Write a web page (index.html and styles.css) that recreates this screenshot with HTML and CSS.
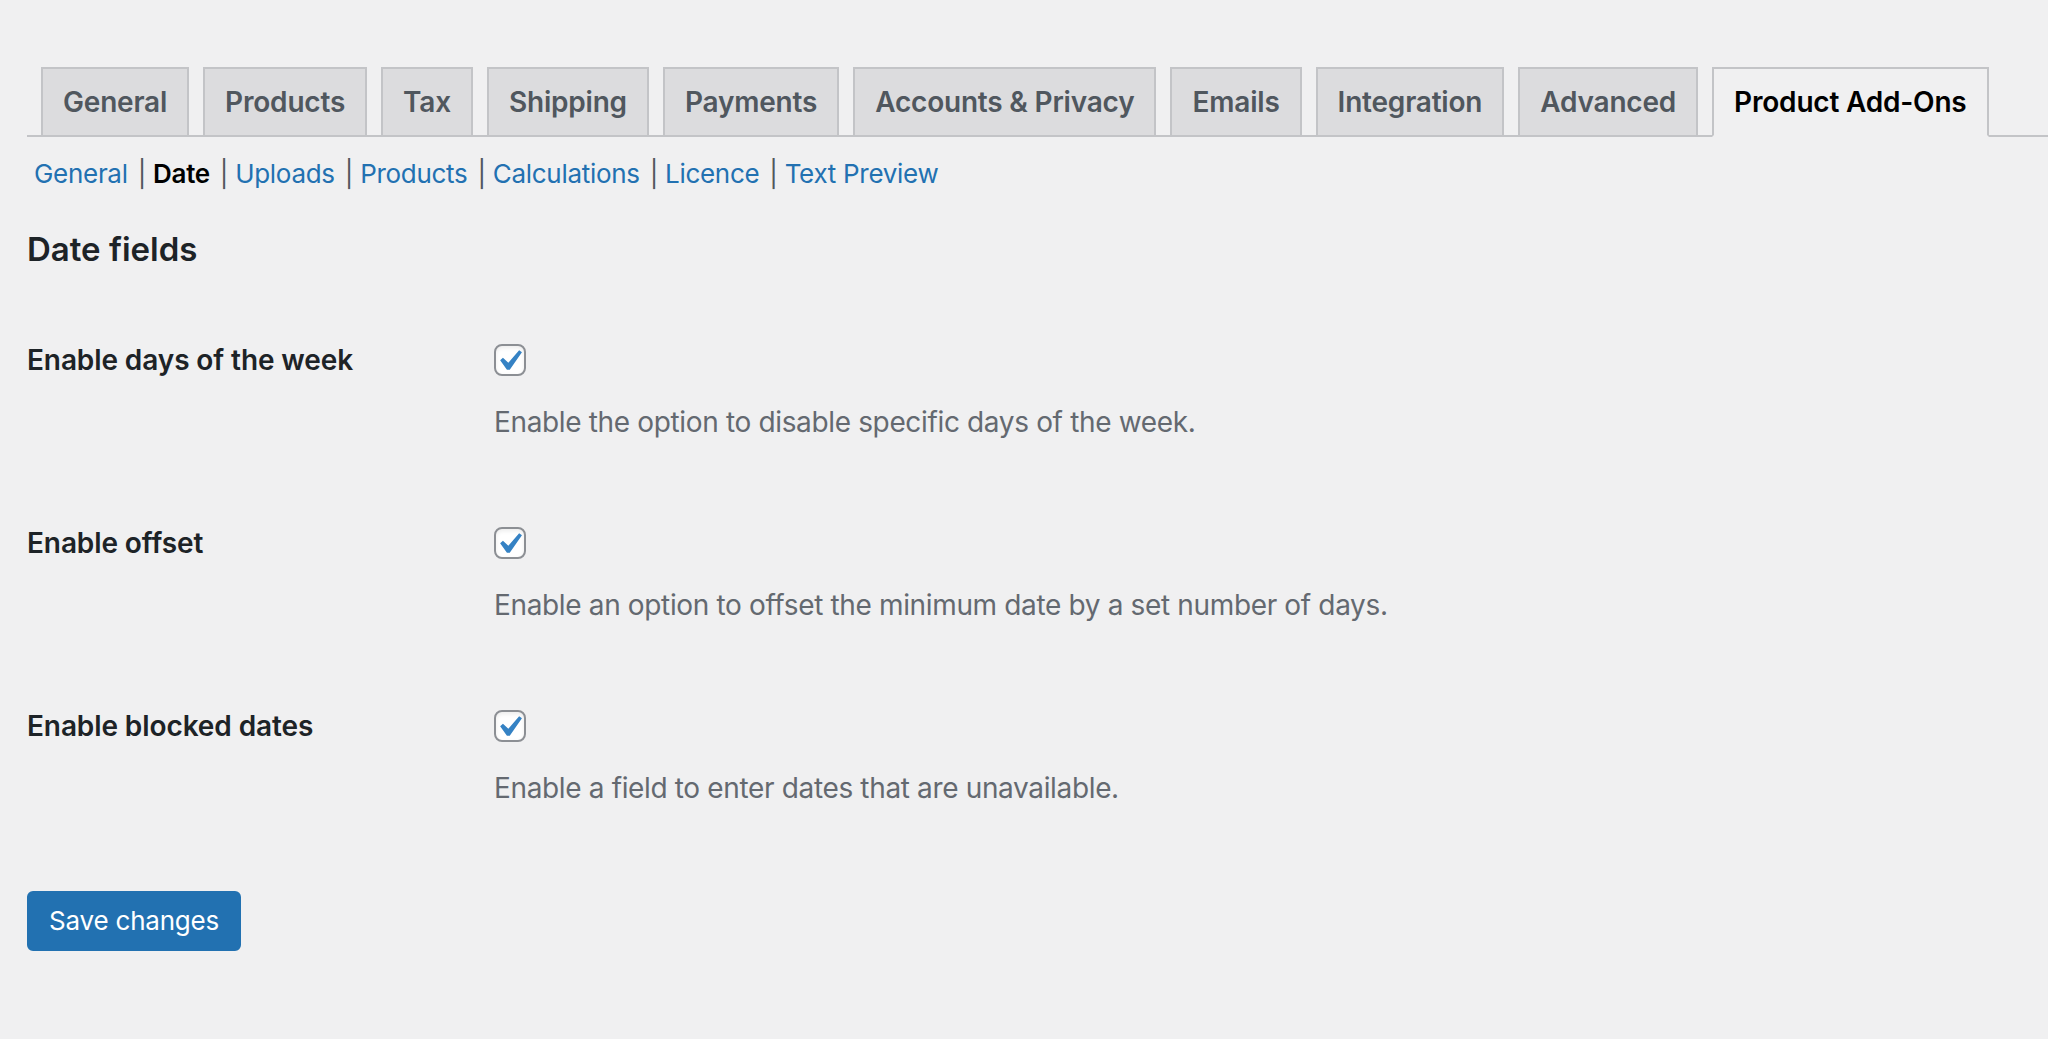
FILE: index.html
```html
<!DOCTYPE html>
<html lang="en">

<head>
    <meta charset="UTF-8">
    <title>Settings - Product Add-Ons</title>
    <link rel="stylesheet" href="styles.css">
</head>

<body>

    <div class="wrap">
        <nav class="nav-tab-wrapper">
            <a class="nav-tab" href="#">General</a>
            <a class="nav-tab" href="#">Products</a>
            <a class="nav-tab" href="#">Tax</a>
            <a class="nav-tab" href="#">Shipping</a>
            <a class="nav-tab" href="#">Payments</a>
            <a class="nav-tab" href="#">Accounts &amp; Privacy</a>
            <a class="nav-tab" href="#">Emails</a>
            <a class="nav-tab" href="#">Integration</a>
            <a class="nav-tab" href="#">Advanced</a>
            <a class="nav-tab nav-tab-active" href="#">Product Add-Ons</a>
        </nav>

        <ul class="subsubsub">
            <li><a href="#">General</a><span class="sep">|</span></li>
            <li><a href="#" class="current">Date</a><span class="sep">|</span></li>
            <li><a href="#">Uploads</a><span class="sep">|</span></li>
            <li><a href="#">Products</a><span class="sep">|</span></li>
            <li><a href="#">Calculations</a><span class="sep">|</span></li>
            <li><a href="#">Licence</a><span class="sep">|</span></li>
            <li><a href="#">Text Preview</a></li>
        </ul>

        <h2 class="section-title">Date fields</h2>

        <div class="form-table">
            <div class="form-row">
                <div class="form-label">Enable days of the week</div>
                <div class="form-field">
                    <span class="checkbox">
                        <svg viewBox="0 0 20 20" width="42" height="42"><path d="M14.83 4.89l1.34.94-5.81 8.38H9.02L5.78 9.67l1.34-1.25 2.57 2.4z" fill="#3582c4"/></svg>
                    </span>
                    <p class="description">Enable the option to disable specific days of the week.</p>
                </div>
            </div>
            <div class="form-row">
                <div class="form-label">Enable offset</div>
                <div class="form-field">
                    <span class="checkbox">
                        <svg viewBox="0 0 20 20" width="42" height="42"><path d="M14.83 4.89l1.34.94-5.81 8.38H9.02L5.78 9.67l1.34-1.25 2.57 2.4z" fill="#3582c4"/></svg>
                    </span>
                    <p class="description">Enable an option to offset the minimum date by a set number of days.</p>
                </div>
            </div>
            <div class="form-row">
                <div class="form-label">Enable blocked dates</div>
                <div class="form-field">
                    <span class="checkbox">
                        <svg viewBox="0 0 20 20" width="42" height="42"><path d="M14.83 4.89l1.34.94-5.81 8.38H9.02L5.78 9.67l1.34-1.25 2.57 2.4z" fill="#3582c4"/></svg>
                    </span>
                    <p class="description">Enable a field to enter dates that are unavailable.</p>
                </div>
            </div>
        </div>

        <button class="button-primary" type="button">Save changes</button>
    </div>

</body>

</html>
```

FILE: styles.css
```css
/* Page */
body {
    margin: 0;
    background: #f0f0f1;
    font-family: Inter, "Noto Sans", sans-serif;
    color: #1d2327;
}

.wrap {
    padding: 67px 0 0 27px;
}

/* Top tabs */
.nav-tab-wrapper {
    display: flex;
    border-bottom: 2px solid #c3c4c7;
}

.nav-tab {
    margin-left: 14px;
    margin-bottom: -2px;
    padding: 10px 20px;
    border: 2px solid #c3c4c7;
    background: #dcdcde;
    color: #50575e;
    font-size: 28px;
    font-weight: 600;
    line-height: 46px;
    letter-spacing: -0.2px;
    text-decoration: none;
    white-space: nowrap;
}

.nav-tab-active {
    background: #f0f0f1;
    border-bottom-color: #f0f0f1;
    color: #000;
}

/* Sub navigation */
.subsubsub {
    display: flex;
    list-style: none;
    margin: 19px 0 0;
    padding: 0 0 0 7px;
    font-size: 26px;
    line-height: 36px;
    letter-spacing: -0.3px;
    color: #50575e;
}

.subsubsub a {
    color: #2271b1;
    text-decoration: none;
}

.subsubsub a.current {
    color: #000;
    font-weight: 600;
}

.subsubsub .sep {
    margin: 0 7px 0 10px;
}

/* Section heading */
.section-title {
    margin: 39px 0 0;
    font-size: 33px;
    font-weight: 600;
    line-height: 36px;
    color: #1d2327;
}

/* Form rows */
.form-table {
    display: flex;
    flex-direction: column;
    gap: 87px;
    margin-top: 77px;
}

.form-row {
    display: flex;
}

.form-label {
    width: 467px;
    flex-shrink: 0;
    font-size: 28px;
    font-weight: 600;
    line-height: 32px;
    letter-spacing: -0.1px;
}

.form-field {
    display: flex;
    flex-direction: column;
    align-items: flex-start;
}

.checkbox {
    display: flex;
    width: 28px;
    height: 28px;
    border: 2px solid #8c8f94;
    border-radius: 8px;
    background: #fff;
    box-shadow: inset 0 2px 4px rgba(0, 0, 0, 0.08);
}

.checkbox svg {
    margin: -6px 0 0 -8px;
    flex-shrink: 0;
}

.description {
    margin: 28px 0 0;
    font-size: 28px;
    line-height: 36px;
    letter-spacing: -0.35px;
    color: #646970;
}

/* Save button */
.button-primary {
    margin-top: 85px;
    height: 60px;
    padding: 0 20px;
    border: 2px solid #2271b1;
    border-radius: 6px;
    background: #2271b1;
    color: #fff;
    font-family: inherit;
    font-size: 26px;
    line-height: 56px;
    letter-spacing: -0.2px;
    cursor: pointer;
}
```
